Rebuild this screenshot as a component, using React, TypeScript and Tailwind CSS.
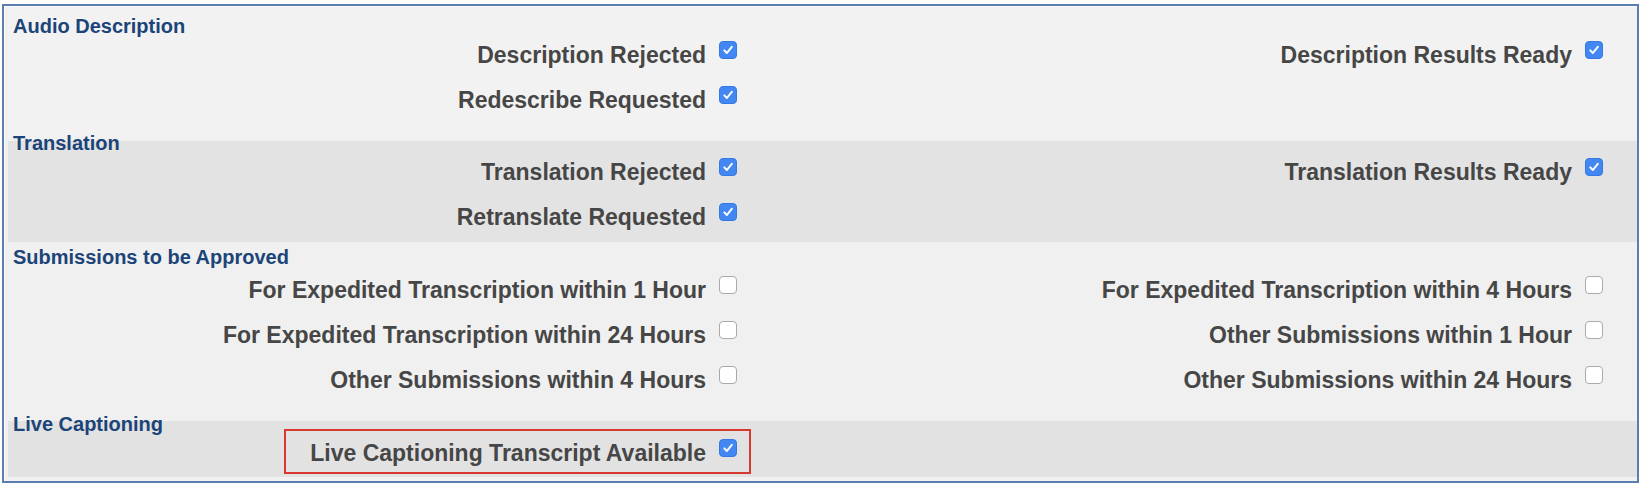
import React from "react";

type Item = { label: string; checked: boolean };

function Box({ checked }: { checked: boolean }) {
  if (checked) {
    return (
      <div className="mt-[5px] w-[18px] h-[18px] shrink-0 rounded-[4px] bg-[#4388f2] border border-[#3679e0] flex items-center justify-center">
        <svg width="12" height="12" viewBox="0 0 12 12" fill="none">
          <path d="M2.3 6.4 L4.9 9 L9.8 2.8" stroke="white" strokeWidth="2" strokeLinecap="round" strokeLinejoin="round" />
        </svg>
      </div>
    );
  }
  return <div className="mt-[5px] w-[18px] h-[18px] shrink-0 rounded-[4px] bg-white border border-[#aaaaaa]" />;
}

function Cell({ item, outline }: { item?: Item; outline?: boolean }) {
  if (!item) return <div />;
  return (
    <div className="relative flex items-start justify-end gap-[13px] h-[36px]">
      <span className="leading-[38px] text-[23px] font-bold text-[#464646] whitespace-nowrap">{item.label}</span>
      <Box checked={item.checked} />
      {outline && (
        <div className="absolute left-[276px] -right-[14px] -top-[5px] -bottom-[4px] border-2 border-[#d8392e] pointer-events-none" />
      )}
    </div>
  );
}

function Rows({ rows, gapTop, outline }: { rows: [Item | undefined, Item | undefined][]; gapTop: string; outline?: boolean }) {
  return (
    <div className={`flex flex-col gap-[9px] ${gapTop}`}>
      {rows.map((r, i) => (
        <div key={i} className="grid grid-cols-[729px_866px]">
          <Cell item={r[0]} outline={outline} />
          <Cell item={r[1]} />
        </div>
      ))}
    </div>
  );
}

function Heading({ children, className = "" }: { children: React.ReactNode; className?: string }) {
  return (
    <h3 className={`relative h-[20px] leading-[20px] text-[20px] font-bold text-[#1b4478] pl-[5px] whitespace-nowrap ${className}`}>
      {children}
    </h3>
  );
}

export default function App() {
  const c = (label: string): Item => ({ label, checked: true });
  const u = (label: string): Item => ({ label, checked: false });
  return (
    <div
      className="w-[1640px] h-[486px] bg-white pt-[4px] pl-[2px] pr-[1px] pb-[3px]"
      style={{ fontFamily: '"Liberation Sans", Arial, Helvetica, sans-serif' }}
    >
      <div className="h-[479px] border-2 border-[#5b7eb2] bg-[#f1f1f1]">
        <div className="h-full border-l border-t border-[#fafafa] pl-[3px] pb-[4px] flex flex-col">
          {/* Audio Description */}
          <section className="bg-[#f2f2f2] pt-[9px] pb-[16px]">
            <Heading>Audio Description</Heading>
            <Rows
              gapTop=""
              rows={[
                [c("Description Rejected"), c("Description Results Ready")],
                [c("Redescribe Requested"), undefined],
              ]}
            />
          </section>
          {/* Translation */}
          <section className="bg-[#e3e3e3] border-t-[8px] border-[#f1f1f1] pb-[8px]">
            <Heading className="-mt-[8px]">Translation</Heading>
            <Rows
              gapTop=""
              rows={[
                [c("Translation Rejected"), c("Translation Results Ready")],
                [c("Retranslate Requested"), undefined],
              ]}
            />
          </section>
          {/* Submissions */}
          <section className="bg-[#f0f0f0] pt-[5px] pb-[17px]">
            <Heading>Submissions to be Approved</Heading>
            <Rows
              gapTop="mt-[4px]"
              rows={[
                [u("For Expedited Transcription within 1 Hour"), u("For Expedited Transcription within 4 Hours")],
                [u("For Expedited Transcription within 24 Hours"), u("Other Submissions within 1 Hour")],
                [u("Other Submissions within 4 Hours"), u("Other Submissions within 24 Hours")],
              ]}
            />
          </section>
          {/* Live Captioning */}
          <section className="bg-[#e2e2e2] border-t-[7px] border-[#f0f0f0] pb-[7px]">
            <Heading className="-mt-[7px]">Live Captioning</Heading>
            <Rows gapTop="" outline rows={[[c("Live Captioning Transcript Available"), undefined]]} />
          </section>
        </div>
      </div>
    </div>
  );
}
